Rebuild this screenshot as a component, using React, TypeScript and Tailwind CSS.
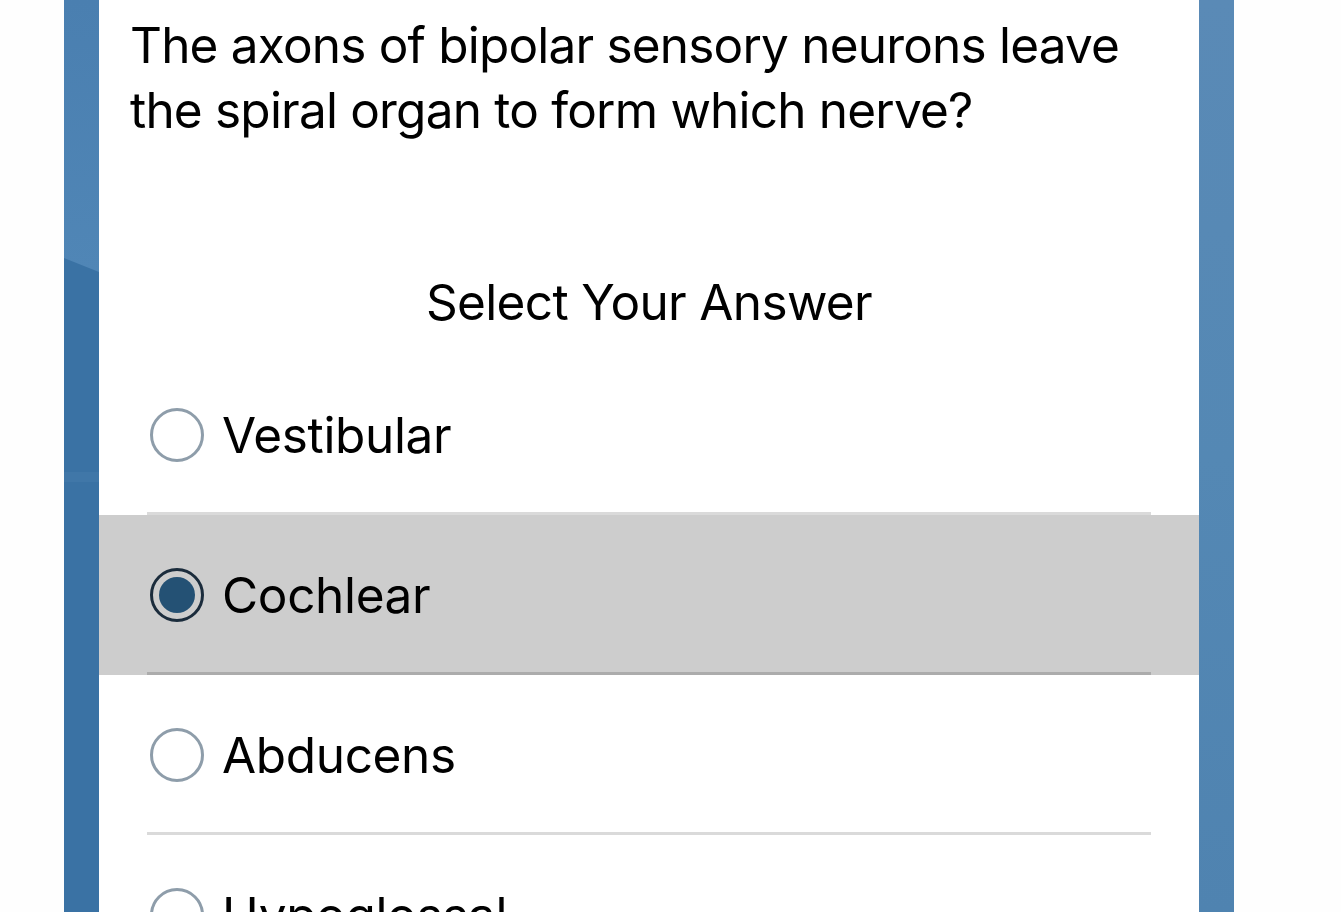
import { useState } from 'react';

type Choice = {
  id: string;
  label: string;
};

const choices: Choice[] = [
  { id: 'vestibular', label: 'Vestibular' },
  { id: 'cochlear', label: 'Cochlear' },
  { id: 'abducens', label: 'Abducens' },
  { id: 'hypoglossal', label: 'Hypoglossal' },
];

function Radio({ checked }: { checked: boolean }) {
  if (checked) {
    return (
      <span className="flex h-[54px] w-[54px] shrink-0 items-center justify-center rounded-full border-[3px] border-[#1b2c3c]">
        <span className="h-[36px] w-[36px] rounded-full bg-[#245174]" />
      </span>
    );
  }
  return <span className="h-[54px] w-[54px] shrink-0 rounded-full border-[3px] border-[#8e9daa]" />;
}

function Strip({ side }: { side: 'left' | 'right' }) {
  if (side === 'right') {
    return <div className="w-[35px] shrink-0 bg-gradient-to-b from-[#5a8ab6] via-[#5488b4] to-[#4f83b0]" />;
  }
  return (
    <div className="relative w-[35px] shrink-0 overflow-hidden bg-[#3a72a4]">
      <svg className="absolute inset-0 h-full w-full" viewBox="0 0 35 912" preserveAspectRatio="none">
        <defs>
          <linearGradient id="stripTop" x1="0" y1="0" x2="0" y2="1">
            <stop offset="0" stopColor="#4a7fb0" />
            <stop offset="1" stopColor="#5086b6" />
          </linearGradient>
        </defs>
        <polygon points="0,0 35,0 35,272 0,258" fill="url(#stripTop)" />
        <rect x="0" y="472" width="35" height="10" fill="#4a80b0" opacity="0.4" />
      </svg>
    </div>
  );
}

export default function App() {
  const [selected, setSelected] = useState('cochlear');

  return (
    <div
      className="flex h-[912px] w-full overflow-hidden bg-[#fefefe] text-black"
      style={{ fontFamily: 'Inter, "Noto Sans", sans-serif' }}
    >
      <div className="w-[64px] shrink-0" />
      <Strip side="left" />

      <main className="w-[1100px] shrink-0 bg-white">
        <p className="pl-[31px] pr-[30px] pt-[13px] text-[49.5px] leading-[65px] tracking-[-0.8px]">
          The axons of bipolar sensory neurons leave the spiral organ to form which nerve?
        </p>

        <h2 className="mt-[127px] text-center text-[49.5px] leading-[65px] tracking-[-0.65px]">Select Your Answer</h2>

        <ul className="mt-[20px]">
          {choices.map((choice) => {
            const isSelected = selected === choice.id;
            return (
              <li key={choice.id} className={isSelected ? 'bg-[#cdcdcd]' : ''}>
                <button
                  onClick={() => setSelected(choice.id)}
                  className={`mx-12 flex h-[160px] w-[1004px] items-center gap-[18px] border-b-[3px] pl-[3px] pt-[3px] text-left ${
                    isSelected ? 'border-[#acacac]' : 'border-[#dadada]'
                  }`}
                >
                  <Radio checked={isSelected} />
                  <span className="text-[49.5px] leading-[65px] tracking-[-0.35px]">{choice.label}</span>
                </button>
              </li>
            );
          })}
        </ul>
      </main>

      <Strip side="right" />
      <div className="flex-1" />
    </div>
  );
}
